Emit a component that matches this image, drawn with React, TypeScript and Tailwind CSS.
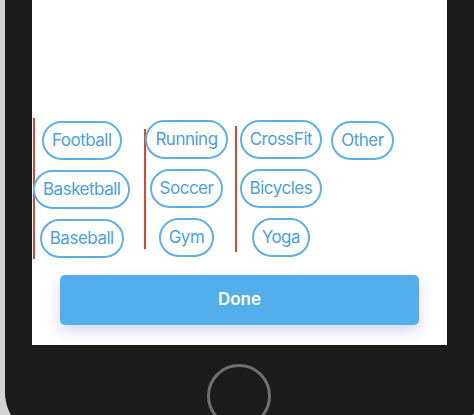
import React from 'react';

const font = { fontFamily: 'Inter, "Noto Sans", "Liberation Sans", sans-serif' };

function Chip({ label }: { label: string }) {
  return (
    <div className="h-[39px] px-[8px] flex items-center justify-center rounded-full border-2 border-[#5fb0e8] text-[#4b9fe0] text-[17px] tracking-[-0.5px] whitespace-nowrap bg-white">
      {label}
    </div>
  );
}

export default function App() {
  return (
    <div className="w-[474px] h-[415px] overflow-hidden bg-[#d2d2d2] relative" style={font}>
      {/* phone body */}
      <div className="ml-[5px] w-[474px] h-[440px] bg-[#1b1b1b] rounded-b-[48px] flex flex-col">
        {/* screen */}
        <div className="ml-[27px] w-[415px] h-[345px] bg-white flex flex-col pt-[118px]">
          <div className="flex items-center">
            <div className="ml-[1px] w-[2px] h-[141px] bg-[#e0442c]" />
            <div className="-ml-[2px] flex flex-col items-center gap-[10px] pt-[3px] pb-[1px]">
              <Chip label="Football" />
              <Chip label="Basketball" />
              <Chip label="Baseball" />
            </div>
            <div className="ml-[14px] w-[2px] h-[120px] bg-[#e0442c]" />
            <div className="-ml-[1px] flex flex-col items-center gap-[10px]">
              <Chip label="Running" />
              <Chip label="Soccer" />
              <Chip label="Gym" />
            </div>
            <div className="ml-[7px] w-[2px] h-[126px] bg-[#e0442c]" />
            <div className="ml-[3px] flex flex-col items-center gap-[10px]">
              <Chip label="CrossFit" />
              <Chip label="Bicycles" />
              <Chip label="Yoga" />
            </div>
            <div className="ml-[9px] self-start pt-[3px]">
              <Chip label="Other" />
            </div>
          </div>
          <button className="mt-[16px] ml-[28px] w-[359px] h-[50px] rounded-[5px] bg-[#53aeec] text-white text-[17px] font-semibold shadow-[0_6px_14px_rgba(90,90,210,0.25)]">
            Done
          </button>
        </div>
        {/* home button */}
        <div className="flex justify-center pr-[7px] mt-[19px]">
          <div className="w-[64px] h-[64px] rounded-full border-[3px] border-[#6e6e6e]" />
        </div>
      </div>
    </div>
  );
}
